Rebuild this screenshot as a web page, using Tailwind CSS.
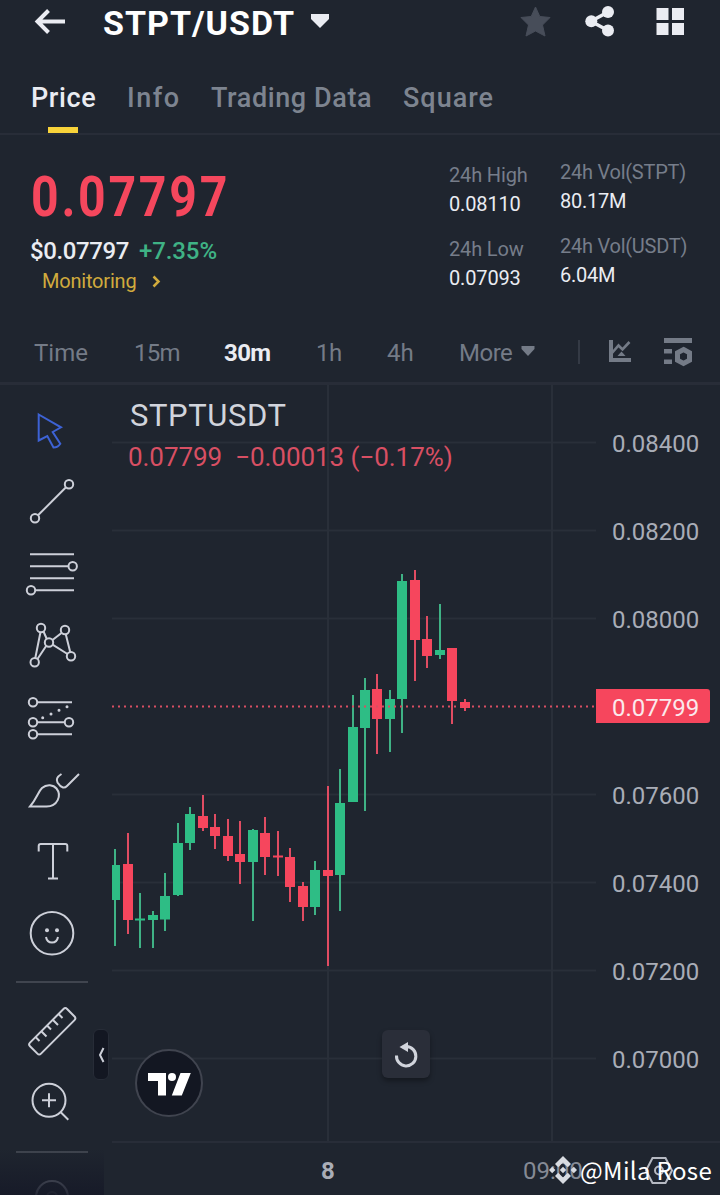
<!DOCTYPE html>
<html lang="en">
<head>
    <meta charset="UTF-8">
    <meta name="viewport" content="width=device-width, initial-scale=1.0">
    <title>STPT/USDT</title>
    <script src="https://cdn.jsdelivr.net/npm/@tailwindcss/browser@4"></script>
</head>
<body class="w-[720px] h-[1195px] bg-[#1f252f] font-['Roboto',sans-serif] whitespace-nowrap overflow-hidden flex flex-col relative">

    <!-- Top bar -->
    <header class="h-[46px] shrink-0 flex items-start text-[#eaecf2]">
        <svg class="ml-[32px] mt-[6px] w-[36px] h-[32px]" viewBox="0 0 36 32" fill="none" stroke="currentColor" stroke-width="4">
            <path d="M33 15.5H6M16.5 4.500L5.500 15.500L16.500 26.500"/>
        </svg>
        <h1 class="ml-[35px] w-[207px] text-[34px] leading-[46px] font-bold tracking-[1px] text-white">STPT/USDT</h1>
        <svg class="mt-[13px] w-[20px] h-[16px]" viewBox="0 0 20 16" fill="currentColor"><path d="M1 1h18v5l-9 9l-9-9z"/></svg>
        <svg class="ml-[190px] mt-[4px] w-[32px] h-[34px] text-[#474d59]" viewBox="0 0 32 34" fill="currentColor">
            <path d="M15.500 3l4.300 9.500l10.200 1l-7.500 7.500l2.500 11l-9.500-5l-9.500 5l2.500-11l-7.500-7.500l10.200-1z" stroke="currentColor" stroke-width="1" stroke-linejoin="round"/>
        </svg>
        <svg class="ml-[32px] mt-[4px] w-[32px] h-[34px]" viewBox="0 0 32 34" fill="currentColor">
            <path d="M24 8L7 17.300L24 26.500" fill="none" stroke="currentColor" stroke-width="3.500"/>
            <circle cx="24" cy="8" r="6"/><circle cx="7.300" cy="17.300" r="6"/><circle cx="24" cy="26.500" r="6"/>
        </svg>
        <svg class="ml-[40px] mt-[8px] w-[28px] h-[27px]" viewBox="0 0 28 27" fill="currentColor">
            <path d="M.500 0h12v12h-12zM16 0h12v12h-12zM.500 15h12v12h-12zM16 15h12v12h-12z"/>
        </svg>
    </header>

    <!-- Tabs -->
    <nav class="h-[89px] shrink-0 border-b-2 border-[#282d38] flex items-start text-[27px] leading-[36px] font-medium text-[#7d8490]">
        <div class="relative ml-[31px] mt-[34px] w-[96px] tracking-[0.6px] text-[#eaecf2]">Price
            <div class="absolute left-[17px] top-[47px] w-[30px] h-[6px] bg-[#f8d33a]"></div>
        </div>
        <div class="mt-[34px] w-[84px] tracking-[1.5px]">Info</div>
        <div class="mt-[34px] w-[192px] tracking-[0.6px]">Trading Data</div>
        <div class="mt-[34px] tracking-[1px]">Square</div>
    </nav>

    <!-- Price summary -->
    <section class="h-[193px] shrink-0 flex items-start">
        <div class="ml-[30px] w-[419px]">
            <div class="ml-[1px] mt-[29px] h-[64px] origin-left scale-x-86 text-[56px] leading-[67px] font-bold tracking-[3.2px] text-[#f5475d]">0.07797</div>
            <div class="mt-[8px] h-[30px] flex text-[24px] leading-[30px] font-medium">
                <span class="w-[109px] text-[#eaecf2] tracking-[-0.400px]">$0.07797</span>
                <span class="text-[#3fb285] tracking-[-0.100px]">+7.35%</span>
            </div>
            <div class="ml-[12px] mt-[1px] h-[28px] flex items-center text-[20px] leading-[28px] text-[#d1ab3d]">
                <span class="w-[110px] tracking-[-0.200px]">Monitoring</span>
                <svg class="w-[9px] h-[13px]" viewBox="0 0 9 13" fill="none" stroke="currentColor" stroke-width="2.500"><path d="M1.500 1.500L6.500 6.500L1.500 11.500"/></svg>
            </div>
        </div>
        <dl class="mt-[26px] w-[111px] text-[20px] leading-[29px] tracking-[-0.150px]">
            <dt class="text-[#767d8a]">24h High</dt>
            <dd class="text-[#eaecf2]">0.08110</dd>
            <dt class="mt-[16px] text-[#767d8a]">24h Low</dt>
            <dd class="text-[#eaecf2]">0.07093</dd>
        </dl>
        <dl class="mt-[23px] text-[20px] leading-[29px] tracking-[-0.250px]">
            <dt class="text-[#767d8a]">24h Vol(STPT)</dt>
            <dd class="text-[#eaecf2]">80.17M</dd>
            <dt class="mt-[16px] text-[#767d8a]">24h Vol(USDT)</dt>
            <dd class="text-[#eaecf2]">6.04M</dd>
        </dl>
    </section>

    <!-- Intervals -->
    <nav class="h-[57px] shrink-0 border-b-3 border-[#282d38] flex items-start text-[24px] leading-[50px] text-[#747b87]">
        <span class="ml-[34px] w-[100px]">Time</span>
        <span class="w-[90px] tracking-[-0.800px]">15m</span>
        <span class="w-[92px] font-bold tracking-[-0.600px] text-[#eaecf2]">30m</span>
        <span class="w-[71px] tracking-[-0.500px]">1h</span>
        <span class="w-[72px]">4h</span>
        <span class="w-[62px] tracking-[-0.500px]">More</span>
        <svg class="mt-[17px] w-[14px] h-[12px]" viewBox="0 0 14 12" fill="currentColor"><path d="M.500 1h13v3l-6.500 7l-6.500-7z"/></svg>
        <span class="ml-[43px] mt-[12px] w-[2px] h-[24px] bg-[#343a45]"></span>
        <svg class="ml-[28px] mt-[10px] w-[25px] h-[26px]" viewBox="0 0 25 26">
            <path d="M3 2v20h20" fill="none" stroke="currentColor" stroke-width="4"/>
            <path d="M4 15l6.500-7.500l4 4L21.500 4" fill="none" stroke="currentColor" stroke-width="2.600"/>
            <path d="M13.500 13.500l4 4.500h-8z" fill="currentColor"/>
        </svg>
        <svg class="ml-[30px] mt-[9px] w-[30px] h-[31px]" viewBox="0 0 30 31" fill="currentColor">
            <path d="M1 1h28v5h-28zM1 12h8v4.500h-8zM1 22.500h8v4.500h-8z"/>
            <path d="M20.500 12.500l6 3.300v7.400l-6 3.300l-6-3.300v-7.400z" fill="none" stroke="currentColor" stroke-width="5"/>
        </svg>
    </nav>

    <main class="flex-1 min-h-0 flex relative">
        <!-- Drawing tools -->
        <aside class="w-[104px] h-[810px] shrink-0 pt-[9px] pl-[16px] overflow-hidden flex flex-col text-[#cdd0d9] relative">
            <svg class="w-[72px] h-[72px] shrink-0" viewBox="0 0 72 72" fill="none" stroke="#3d62d4" stroke-width="2">
                <path d="M22.700 20.500L45 33.300L36.700 38L44.300 49.800Q42 53.500 37.500 53.500L31.300 42L22.700 46.500z"/>
            </svg>
            <svg class="w-[72px] h-[72px] shrink-0" viewBox="0 0 72 72" fill="none" stroke="currentColor" stroke-width="2">
                <path d="M22 49.300L50 21.300"/><circle cx="53" cy="18.300" r="4.200"/><circle cx="19" cy="52.300" r="4.200"/>
            </svg>
            <svg class="w-[72px] h-[72px] shrink-0" viewBox="0 0 72 72" fill="none" stroke="currentColor" stroke-width="2">
                <path d="M14 16.300H58M14 28.300H52.500M14 40.300H58M19 52.300H58"/><circle cx="56.700" cy="28.300" r="4.200"/><circle cx="15" cy="52.300" r="4.200"/>
            </svg>
            <svg class="w-[72px] h-[72px] shrink-0" viewBox="0 0 72 72" fill="none" stroke="currentColor" stroke-width="2">
                <path d="M24.500 22L19.300 48M27.500 21.500L30.800 29M36.500 30L45.500 23M49.700 24L54.200 42M36.600 34.700L51.500 44M30.300 35.700L21.500 49"/>
                <circle cx="25" cy="18" r="4.200"/><circle cx="49" cy="20" r="4.200"/><circle cx="33" cy="32.500" r="4.200"/><circle cx="18.700" cy="52.300" r="4.200"/><circle cx="55" cy="46.300" r="4.200"/>
            </svg>
            <svg class="w-[72px] h-[72px] shrink-0" viewBox="0 0 72 72" fill="none" stroke="currentColor" stroke-width="2">
                <path d="M21 20.300H56M21 40.300H49M21 52.300H56"/>
                <circle cx="17" cy="20.300" r="4.200"/><circle cx="17" cy="40.300" r="4.200"/><circle cx="53" cy="40.300" r="4.200"/><circle cx="17" cy="52.300" r="4.200"/>
                <path d="M26.700 35.700h.01M35 32h.01M43 28.300h.01M51 24.700h.01" stroke-width="3" stroke-linecap="round"/>
            </svg>
            <svg class="w-[72px] h-[72px] shrink-0" viewBox="0 0 72 72" fill="none" stroke="currentColor" stroke-width="2">
                <path d="M14 52.500C21 44 22 38 26 34C31 29.500 37.500 30.800 40.500 34.500C46 41.500 41.500 52.500 30.500 52.500z"/>
                <path d="M45.500 20Q39 24 41.500 28.500Q44 32.500 47 33.500Q49 34 51 32L63 20"/>
            </svg>
            <svg class="w-[72px] h-[72px] shrink-0" viewBox="0 0 72 72" fill="none" stroke="currentColor" stroke-width="2">
                <path d="M22.700 25.500V20Q22.700 18 24.700 18H49.300Q51.300 18 51.300 20V25.500M37 18V52.500M32 52.500H42"/>
            </svg>
            <svg class="w-[72px] h-[72px] shrink-0" viewBox="0 0 72 72" fill="none" stroke="currentColor" stroke-width="2">
                <circle cx="36" cy="35.300" r="21.300"/><path d="M30 39Q31 44.500 36 44.500T42 39"/>
                <circle cx="31" cy="32.300" r="2" fill="currentColor" stroke="none"/><circle cx="41" cy="32.300" r="2" fill="currentColor" stroke="none"/>
            </svg>
            <div class="mt-[11px] w-[72px] h-[2px] shrink-0 bg-[#40454f]"></div>
            <svg class="mt-[12px] w-[72px] h-[72px] shrink-0" viewBox="0 0 72 72" fill="none" stroke="currentColor" stroke-width="2">
                <path d="M47.500 14Q49.300 12.200 51.100 14L58.500 21.500Q60.300 23.300 58.500 25.100L25 58.600Q23.200 60.400 21.400 58.600L14 51.200Q12.200 49.400 14 47.600z"/>
                <path d="M19.500 42L23.500 46M25.300 36.200L30.500 41.500M31 30.500L35 34.500M36.700 24.800L42 30M42.500 19L46.500 23"/>
            </svg>
            <svg class="w-[72px] h-[72px] shrink-0" viewBox="0 0 72 72" fill="none" stroke="currentColor" stroke-width="2">
                <circle cx="33" cy="33.300" r="16.500"/><path d="M26 33.300H40M33 26.300V40.300M44.500 45L52.300 52.700"/>
            </svg>
            <div class="mt-[12px] w-[72px] h-[2px] shrink-0 bg-[#40454f]"></div>
            <svg class="mt-[12px] w-[72px] h-[72px] shrink-0 text-[#6a6f7a]" viewBox="0 0 72 72" fill="none" stroke="currentColor" stroke-width="2">
                <circle cx="36" cy="32" r="16"/><circle cx="36" cy="32" r="5" stroke="#41464f"/>
            </svg>
            <div class="absolute left-0 bottom-0 w-[104px] h-[46px] bg-linear-to-b from-transparent to-[#151827]/80"></div>
        </aside>

        <!-- Chart -->
        <div class="flex-1 pl-[8px] flex flex-col">
            <div class="h-[756px] flex">
                <svg id="chart" class="w-[484px] h-[756px]" viewBox="112 385 484 756">
                    <path d="M112 442.500H596M112 530.500H596M112 618.500H596M112 794.500H596M112 882.500H596M112 970.500H596M112 1058.500H596M328 385V1141M552 385V1141" stroke="#292f39" stroke-width="2" fill="none"/>
                    <g id="candles"></g>
                    <path d="M112 706.500H596" stroke="#d84f63" stroke-width="2" stroke-dasharray="2 4"/>
                </svg>
                <div class="w-[124px] pt-[14px] flex flex-col text-[24px] leading-[90px] text-[#a9adb7]">
                    <div class="h-[88px] pl-[16px]">0.08400</div>
                    <div class="h-[88px] pl-[16px]">0.08200</div>
                    <div class="h-[88px] pl-[16px]">0.08000</div>
                    <div class="h-[88px] pt-[26px]">
                        <div class="w-[114px] h-[34px] pl-[16px] rounded-r-[3px] bg-[#f6465d] text-[#fbe9ec] leading-[38px]">0.07799</div>
                    </div>
                    <div class="h-[88px] pl-[16px]">0.07600</div>
                    <div class="h-[88px] pl-[16px]">0.07400</div>
                    <div class="h-[88px] pl-[16px]">0.07200</div>
                    <div class="h-[88px] pl-[16px]">0.07000</div>
                </div>
            </div>
            <div class="flex-1 border-t-2 border-[#282d38] flex text-[24px] leading-[56px] text-[#a9adb7]">
                <span class="ml-[209px] w-[202px] font-bold">8</span>
                <span class="w-[122px] text-[#858a95]">09:00</span>
                <svg class="mt-[12px] w-[28px] h-[32px]" viewBox="0 0 28 32" fill="none" stroke="#b5b9c2" stroke-width="2">
                    <path d="M7.500 3h13l6.500 12.500l-6.500 12.500h-13l-6.500-12.500z"/><circle cx="14" cy="15.500" r="4"/>
                </svg>
            </div>
        </div>

        <!-- Legend -->
        <div class="absolute left-[130px] top-[12px] text-[31px] leading-[38px] tracking-[0.6px] text-[#d1d4dc]">STPTUSDT</div>
        <div class="absolute left-[128px] top-[55px] flex gap-[13px] text-[26px] leading-[34px] tracking-[-0.050px] text-[#d84f63]">
            <span>0.07799</span><span>−0.00013 (−0.17%)</span>
        </div>

        <!-- Sidebar toggle -->
        <div class="absolute left-[93px] top-[644px] w-[16px] h-[51px] rounded-[6px] bg-[#131722] border border-[#272c37] flex items-center justify-center">
            <svg class="w-[7px] h-[16px]" viewBox="0 0 7 16" fill="none" stroke="#cdd0d9" stroke-width="2"><path d="M5.500 1L2 8L5.500 15"/></svg>
        </div>

        <!-- TradingView badge -->
        <svg class="absolute left-[135px] top-[664px] w-[68px] h-[68px]" viewBox="0 0 68 68">
            <circle cx="34" cy="34" r="33" fill="#131722" stroke="#40444f" stroke-width="2"/>
            <path d="M13 24h18v22.500h-8v-14.500h-10zM45.500 24h10.300l-9 22.500h-10z" fill="#fff"/>
            <circle cx="37" cy="28" r="4" fill="#fff"/>
        </svg>

        <!-- Reset -->
        <div class="absolute left-[382px] top-[645px] w-[48px] h-[48px] rounded-[6px] bg-[#2a2e39] shadow-[0_3px_5px_rgba(0,0,0,0.35)]">
            <svg class="w-[48px] h-[48px]" viewBox="0 0 48 48">
                <path d="M14.500 25.500A9.700 9.700 0 1 0 24.500 16.500" fill="none" stroke="#d1d4dc" stroke-width="3"/>
                <path d="M17.500 17L26 12V22z" fill="#d1d4dc"/>
            </svg>
        </div>

        <!-- Author tag -->
        <div class="absolute left-[549px] top-[768px] flex items-center text-[24px] leading-[34px] text-white font-['Noto_Sans_CJK_SC',sans-serif]">
            <svg class="w-[28px] h-[28px]" viewBox="0 0 28 28" fill="#d8dbe1">
                <path d="M14 0l8 8l-3.200 3.200L14 6.400l-4.800 4.800L6 8zM14 28l8-8l-3.200-3.200L14 21.600l-4.800-4.800L6 20zM14 10.800l3.200 3.200L14 17.200L10.800 14zM3.200 10.800L6.400 14l-3.200 3.200L0 14zM24.800 10.800L28 14l-3.200 3.200L21.600 14z"/>
            </svg>
            <span class="ml-[3px] tracking-[0.35px]">@Mila Rose</span>
        </div>
    </main>

    <script>
        // x, high, body top, body bottom, low, up
        const candles = [
            [115, 849, 865, 900, 946, 1],
            [128, 833, 864, 920, 934, 0],
            [140, 893, 918.5, 920.5, 948, 1],
            [153, 911, 915, 920, 948, 1],
            [165, 873, 896, 919.5, 931, 1],
            [178, 823, 843, 895, 896, 1],
            [190, 807, 814, 843, 850, 1],
            [203, 795, 816, 828, 831, 0],
            [215, 814, 827, 836, 849, 0],
            [228, 819, 836, 856, 861, 0],
            [240, 821, 854, 862, 884, 0],
            [253, 829, 830, 862, 921, 1],
            [265, 817, 833, 857, 875, 0],
            [278, 831, 855.5, 857.5, 876, 0],
            [290, 848, 857, 887, 902, 0],
            [303, 882, 886, 907, 921, 0],
            [315, 861, 870, 907, 915, 1],
            [328, 786, 870, 876, 966, 0],
            [340, 769, 803, 875, 911, 1],
            [353, 695, 727, 802, 802, 1],
            [365, 678, 690, 728, 811, 1],
            [377, 674, 689, 719, 754, 0],
            [390, 690, 699, 719, 752, 1],
            [402, 574, 581, 699, 733, 1],
            [415, 570, 580, 640, 681, 0],
            [427, 616, 639, 656, 668, 0],
            [440, 604, 650, 655, 659, 1],
            [452, 648, 648, 701, 724, 0],
            [465, 699, 702, 708, 711, 0]
        ];
        let out = "";
        candles.forEach(([x, high, top, bottom, low, up]) => {
            const body = up ? "#2ebd85" : "#f6465d";
            const wick = up ? "#3fb285" : "#e04c62";
            out += `<rect x="${x - 1}" y="${high}" width="2" height="${low - high}" fill="${wick}"/>`;
            out += `<rect x="${x - 5}" y="${top}" width="10" height="${bottom - top}" fill="${body}"/>`;
        });
        document.getElementById("candles").innerHTML = out;
    </script>
</body>
</html>
